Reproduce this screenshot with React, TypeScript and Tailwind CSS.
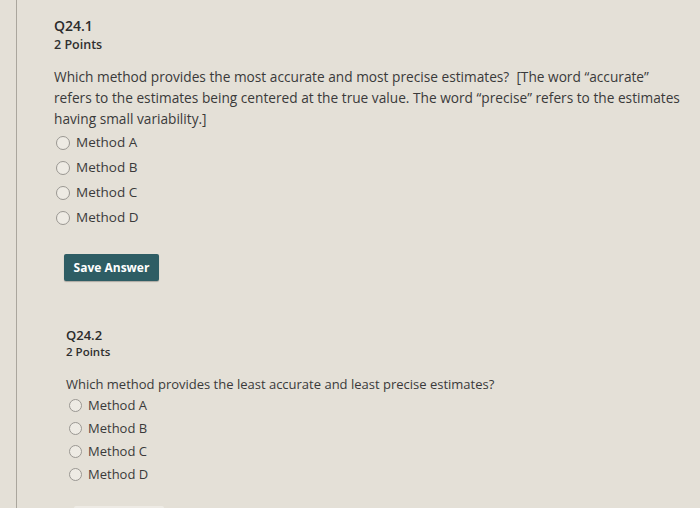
import React from "react";

function Radio({ label, size }: { label: string; size: "lg" | "sm" }) {
  return (
    <label className={size === "lg" ? "flex items-center h-[25px] gap-[6px]" : "flex items-center h-[23px] gap-[6px]"}>
      <span
        className={
          size === "lg"
            ? "w-[14px] h-[14px] rounded-full border border-[#9a9792] bg-[#eeebe4]"
            : "w-[13px] h-[13px] rounded-full border border-[#9a9792] bg-[#eeebe4]"
        }
      />
      <span className={size === "lg" ? "text-[13.5px] text-[#3a3a3a]" : "text-[13px] text-[#3a3a3a]"}>{label}</span>
    </label>
  );
}

export default function App() {
  return (
    <div
      className="w-[700px] h-[508px] bg-[#e4e0d7] flex overflow-hidden"
      style={{ fontFamily: '"Open Sans", "Liberation Sans", sans-serif' }}
    >
      <div className="w-[17px] shrink-0 border-r border-[#aaa69d]" />
      <div className="flex-1 pl-[37px] pt-[16px]">
        <section>
          <div className="text-[14px] leading-[20px] font-semibold text-[#2b2b2b]">Q24.1</div>
          <div className="text-[12.5px] leading-[18px] font-semibold text-[#2f2f2f]">2 Points</div>
          <p className="mt-[12px] w-[640px] text-[13.7px] leading-[21px] text-[#3a3a3a]">
            Which method provides the most accurate and most precise estimates?&nbsp; [The word “accurate”
            <br />
            refers to the estimates being centered at the true value. The word “precise” refers to the estimates
            <br />
            having small variability.]
          </p>
          <div className="mt-[1px] ml-[2px] flex flex-col">
            <Radio size="lg" label="Method A" />
            <Radio size="lg" label="Method B" />
            <Radio size="lg" label="Method C" />
            <Radio size="lg" label="Method D" />
          </div>
          <button className="mt-[24px] ml-[10px] w-[95px] h-[27px] bg-[#2e5d64] text-white text-[12px] font-bold rounded-[2px] shadow-[0_1px_1px_rgba(0,0,0,0.25)]">
            Save Answer
          </button>
        </section>
        <section className="mt-[45px] ml-[12px]">
          <div className="text-[13px] leading-[18px] font-semibold text-[#2b2b2b]">Q24.2</div>
          <div className="text-[11.5px] leading-[16px] font-semibold text-[#2f2f2f]">2 Points</div>
          <p className="mt-[14px] text-[13px] leading-[20px] text-[#3a3a3a]">
            Which method provides the least accurate and least precise estimates?
          </p>
          <div className="ml-[3px] flex flex-col">
            <Radio size="sm" label="Method A" />
            <Radio size="sm" label="Method B" />
            <Radio size="sm" label="Method C" />
            <Radio size="sm" label="Method D" />
          </div>
          <div className="mt-[20px] ml-[8px] w-[90px] h-[4px] bg-[#eeebe5] rounded-t-[2px]" />
        </section>
      </div>
    </div>
  );
}
